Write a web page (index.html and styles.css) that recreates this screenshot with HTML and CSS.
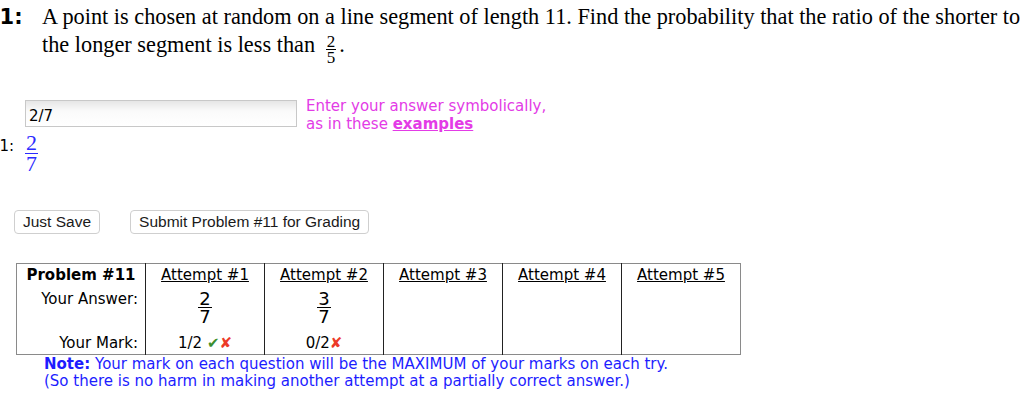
FILE: index.html
```html
<!DOCTYPE html>
<html>
<head>
<meta charset="utf-8">
<link rel="stylesheet" href="styles.css">
</head>
<body>
<div class="page">
  <div class="question">
    <span class="qnum">11:</span>
    <div class="qtext">A point is chosen at random on a line segment of length 11. Find the probability that the ratio of the shorter to<br>the longer segment is less than <span class="sfrac"><span class="sn">2</span><span class="sd">5</span></span>.</div>
  </div>

  <div class="answer">
    <div class="answer-row">
      <div class="input">2/7</div>
      <div class="hint">Enter your answer symbolically,<br>as in these <a class="ex">examples</a></div>
    </div>
    <div class="preview-row">
      <span class="plabel">11:</span>
      <span class="mfrac"><span class="mn">2</span><span class="md">7</span></span>
    </div>
  </div>

  <div class="buttons">
    <span class="btn">Just Save</span>
    <span class="btn">Submit Problem #11 for Grading</span>
  </div>

  <table class="attempts">
    <tr class="hdr">
      <th class="lbl">Problem #11</th>
      <td><u>Attempt #1</u></td>
      <td><u>Attempt #2</u></td>
      <td><u>Attempt #3</u></td>
      <td><u>Attempt #4</u></td>
      <td><u>Attempt #5</u></td>
    </tr>
    <tr class="ans">
      <td class="lbl">Your Answer:</td>
      <td><span class="tfrac"><span class="tn">2</span><span class="td">7</span></span></td>
      <td><span class="tfrac"><span class="tn">3</span><span class="td">7</span></span></td>
      <td></td><td></td><td></td>
    </tr>
    <tr class="mark">
      <td class="lbl">Your Mark:</td>
      <td>1/2 <span class="ok">✔</span><span class="no">✘</span></td>
      <td>0/2<span class="no">✘</span></td>
      <td></td><td></td><td></td>
    </tr>
  </table>

  <div class="note"><b>Note:</b> Your mark on each question will be the MAXIMUM of your marks on each try.<br>(So there is no harm in making another attempt at a partially correct answer.)</div>
</div>
</body>
</html>
```

FILE: styles.css
```css
html, body {
  margin: 0;
  padding: 0;
  background: #fff;
  overflow: hidden;
}
.page {
  width: 1024px;
  height: 405px;
  overflow: hidden;
  font-family: "DejaVu Sans", Verdana, sans-serif;
  font-size: 15px;
  color: #000;
}
.question {
  display: flex;
  align-items: flex-start;
  padding-top: 4px;
}
.qnum {
  font-family: "DejaVu Sans", Verdana, sans-serif;
  font-weight: bold;
  font-size: 21px;
  margin-left: -15px;
  width: 57px;
  flex: none;
  line-height: 26px;
}
.qtext {
  font-family: "Liberation Serif", "Times New Roman", serif;
  font-size: 22.3px;
  line-height: 28px;
  white-space: nowrap;
  margin-top: -1px;
}
.sfrac {
  display: inline-block;
  vertical-align: -11px;
  text-align: center;
  font-size: 17px;
  line-height: 15px;
  margin: -3px 3px 0 5px;
}
.sn {
  display: block;
  border-bottom: 1px solid #000;
  padding: 0 1px 0;
}
.sd {
  display: block;
}
.answer {
  margin-top: 35px;
}
.answer-row {
  display: flex;
  align-items: flex-start;
  padding-left: 25px;
}
.input {
  width: 267px;
  height: 25px;
  border: 1px solid #c8c8c8;
  background: linear-gradient(#e6e6e6, #fafafa 40%, #fff);
  box-sizing: content-box;
  padding-left: 3px;
  line-height: 30px;
  font-size: 15px;
}
.hint {
  color: #e33be6;
  margin-left: 9px;
  line-height: 18px;
  margin-top: -3px;
}
.ex {
  font-weight: bold;
  text-decoration: underline;
  color: #e33be6;
}
.preview-row {
  display: flex;
  align-items: flex-start;
  margin-top: 0;
}
.plabel {
  margin-left: -10px;
  width: 35px;
  line-height: 16px;
  margin-top: 5px;
}
.mfrac {
  display: inline-flex;
  flex-direction: column;
  align-items: center;
  font-family: "Liberation Serif", "Times New Roman", serif;
  font-size: 22px;
  line-height: 20px;
  color: #2b2bff;
}
.mn {
  border-bottom: 1.5px solid #2b2bff;
  padding: 0 1px 0;
}
.md {
  padding-top: 0;
}
.buttons {
  display: flex;
  gap: 30px;
  padding-left: 14px;
  margin-top: 36px;
}
.btn {
  font-family: "Liberation Sans", Arial, sans-serif;
  font-size: 15.5px;
  border: 1px solid #cfcfcf;
  border-radius: 4px;
  background: #fff;
  height: 22px;
  line-height: 22px;
  padding: 0 8px;
  color: #1a1a1a;
}
.attempts {
  margin-top: 29px;
  margin-left: 16px;
  border-collapse: collapse;
  border: 1px solid #8a8a8a;
  font-size: 15px;
  table-layout: fixed;
  width: 725px;
}
.attempts td, .attempts th {
  width: 119px;
  padding: 0;
  text-align: center;
  border-left: 1.5px solid #222;
  vertical-align: top;
  box-sizing: border-box;
}
.attempts .lbl {
  width: 129px;
  text-align: right;
  padding-right: 7px;
  border-left: none;
}
.attempts th.lbl {
  text-align: center;
  font-weight: bold;
  padding-right: 0;
}
.hdr td, .hdr th {
  height: 24px;
  line-height: 20px;
  padding-top: 1px;
}
.ans td {
  height: 42px;
  line-height: 18px;
}
.ans td.lbl {
  padding-top: 2px;
}
.tfrac {
  display: inline-flex;
  flex-direction: column;
  align-items: center;
  font-size: 18px;
  line-height: 17px;
  padding-top: 2px;
}
.tn {
  border-bottom: 1px solid #000;
  padding: 0 1px 0;
}
.td {
  padding-top: 0;
}
.mark td {
  height: 25px;
  line-height: 22px;
  vertical-align: bottom;
}
.ok {
  color: #3b8e2f;
}
.no {
  color: #ec3a28;
}
.note {
  color: #1d1dff;
  margin-left: 44px;
  margin-top: 1px;
  line-height: 17px;
}
.note b {
  font-weight: bold;
}
```
